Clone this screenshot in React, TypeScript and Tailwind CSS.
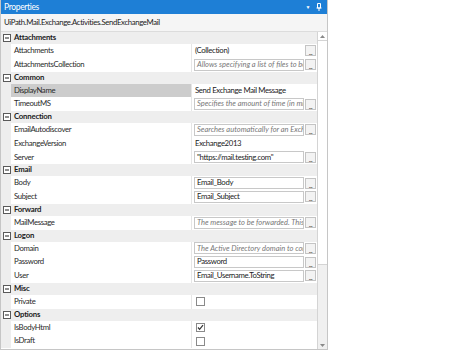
import { Fragment } from "react";

type Prop = {
    name: string;
    kind: "text" | "input" | "hint" | "check";
    value?: string;
    button?: boolean;
    checked?: boolean;
    selected?: boolean;
};

type Category = { title: string; props: Prop[] };

const categories: Category[] = [
    {
        title: "Attachments",
        props: [
            { name: "Attachments", kind: "text", value: "(Collection)", button: true },
            { name: "AttachmentsCollection", kind: "hint", value: "Allows specifying a list of files to be", button: true },
        ],
    },
    {
        title: "Common",
        props: [
            { name: "DisplayName", kind: "text", value: "Send Exchange Mail Message", selected: true },
            { name: "TimeoutMS", kind: "hint", value: "Specifies the amount of time (in mil", button: true },
        ],
    },
    {
        title: "Connection",
        props: [
            { name: "EmailAutodiscover", kind: "hint", value: "Searches automatically for an Exch", button: true },
            { name: "ExchangeVersion", kind: "text", value: "Exchange2013" },
            { name: "Server", kind: "input", value: "\"https://mail.testing.com\"", button: true },
        ],
    },
    {
        title: "Email",
        props: [
            { name: "Body", kind: "input", value: "Email_Body", button: true },
            { name: "Subject", kind: "input", value: "Email_Subject", button: true },
        ],
    },
    {
        title: "Forward",
        props: [{ name: "MailMessage", kind: "hint", value: "The message to be forwarded. This", button: true }],
    },
    {
        title: "Logon",
        props: [
            { name: "Domain", kind: "hint", value: "The Active Directory domain to con", button: true },
            { name: "Password", kind: "input", value: "Password", button: true },
            { name: "User", kind: "input", value: "Email_Username.ToString", button: true },
        ],
    },
    { title: "Misc", props: [{ name: "Private", kind: "check" }] },
    {
        title: "Options",
        props: [
            { name: "IsBodyHtml", kind: "check", checked: true },
            { name: "IsDraft", kind: "check" },
        ],
    },
];

function CollapseIcon() {
    return (
        <svg width="8" height="8" viewBox="0 0 8 8" className="shrink-0">
            <rect x="0.5" y="0.5" width="7" height="7" fill="white" stroke="#5a5a5a" />
            <path d="M2 4h4" stroke="#1e1e1e" />
        </svg>
    );
}

function DotsButton() {
    return (
        <div className="w-[11px] h-[11px] ml-[1px] shrink-0 border border-[#c4c4c4] bg-[#f3f3f3] flex items-end justify-center">
            <span className="text-[7px] leading-[6px] text-[#444] tracking-[-0.5px]">...</span>
        </div>
    );
}

function ValueCell({ p }: { p: Prop }) {
    if (p.kind === "check") {
        return (
            <div className="pl-[4px] flex items-center h-full">
                <div className="w-[9px] h-[9px] border border-[#8a8a8a] bg-white flex items-center justify-center">
                    {p.checked && (
                        <svg width="7" height="7" viewBox="0 0 7 7">
                            <path d="M1 3.5l1.6 1.8L6 1.2" fill="none" stroke="#333" strokeWidth="1.2" />
                        </svg>
                    )}
                </div>
            </div>
        );
    }
    return (
        <div className="flex items-center h-full pl-[2px]">
            {p.kind === "text" ? (
                <div className="w-[110px] h-[12px] pl-[1px] flex items-center overflow-hidden whitespace-nowrap">
                    {p.value}
                </div>
            ) : (
                <div className="w-[110px] h-[12px] border border-[#c8c8c8] bg-white pl-[2px] flex items-center overflow-hidden whitespace-nowrap">
                    <span className={p.kind === "hint" ? "italic text-[#777] text-[7.5px] tracking-normal" : ""}>
                        {p.value}
                    </span>
                </div>
            )}
            {p.button && <DotsButton />}
        </div>
    );
}

export default function App() {
    return (
        <div className="w-[474px] h-[353px] bg-white font-['Lato',sans-serif] text-[7.75px] tracking-[-0.35px] leading-none text-[#1b1b1b]">
            <div className="w-[328px] h-[350px] border-x border-b border-[#c6c6c6] flex flex-col">
                {/* Title bar */}
                <div className="h-[14px] bg-[#1e7fd6] flex items-center px-[3px] text-white">
                    <span className="flex-1 text-[8.5px]">Properties</span>
                    <span className="text-[5px] mr-[6px]">▼</span>
                    <svg width="6" height="8" viewBox="0 0 6 8" className="mr-[2px]">
                        <path d="M1.5 0.5h3v4.5h-3z M0.5 5h5 M3 5v3" fill="none" stroke="white" />
                    </svg>
                </div>

                {/* Type name */}
                <div className="h-[17px] bg-[#f5f5f5] flex items-center px-[3px]">
                    UiPath.Mail.Exchange.Activities.SendExchangeMail
                </div>

                {/* Grid */}
                <div className="flex-1 flex border-t border-[#dcdcdc] min-h-0">
                    <div className="flex-1 flex flex-col overflow-hidden">
                        {categories.map((c) => (
                            <Fragment key={c.title}>
                                <div className="h-[12px] shrink-0 bg-[#eeeeee] flex items-center pl-[2px] gap-[3px]">
                                    <CollapseIcon />
                                    <span className="font-bold tracking-[-0.2px]">{c.title}</span>
                                </div>
                                {c.props.map((p) => (
                                    <div key={p.name} className="h-[13.75px] shrink-0 flex bg-[#eeeeee]">
                                        <div
                                            className={`w-[181px] ml-[10px] flex items-center pl-[3px] text-[#2a2a2a] border-r border-[#e6e6e6] ${
                                                p.selected ? "bg-[#cccccc]" : "bg-white"
                                            }`}
                                        >
                                            {p.name}
                                        </div>
                                        <div className="flex-1 bg-white">
                                            <ValueCell p={p} />
                                        </div>
                                    </div>
                                ))}
                            </Fragment>
                        ))}
                    </div>

                    {/* Scrollbar */}
                    <div className="w-[10px] flex flex-col bg-[#f0f0f0] border-l border-[#d4d4d4]">
                        <div className="h-[9px] border-b border-[#d4d4d4] bg-white flex items-center justify-center">
                            <svg width="5" height="3" viewBox="0 0 5 3">
                                <path d="M0 3L2.5 0L5 3z" fill="#8a8a8a" />
                            </svg>
                        </div>
                        <div className="h-[224px] bg-white border-b border-[#d4d4d4]" />
                        <div className="flex-1" />
                        <div className="h-[8px] flex items-center justify-center">
                            <svg width="5" height="3" viewBox="0 0 5 3">
                                <path d="M0 0L2.5 3L5 0z" fill="#8a8a8a" />
                            </svg>
                        </div>
                    </div>
                </div>
            </div>
        </div>
    );
}
